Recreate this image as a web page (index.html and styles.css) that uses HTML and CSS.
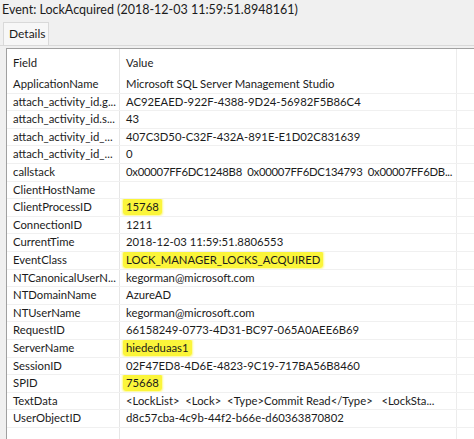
FILE: index.html
```html
<!DOCTYPE html>
<html>
<head>
<meta charset="utf-8">
<link rel="stylesheet" href="styles.css">
</head>
<body>
<div class="titlebar">Event: LockAcquired (2018-12-03 11:59:51.8948161)</div>
<div class="tabs"><div class="tab">Details</div></div>
<div class="pane">
  <div class="grid">
    <div class="row head"><div class="c1">Field</div><div class="c2">Value</div><div class="c3"></div></div>
    <div class="row"><div class="c1">ApplicationName</div><div class="c2">Microsoft SQL Server Management Studio</div><div class="c3"></div></div>
    <div class="row"><div class="c1">attach_activity_id.g...</div><div class="c2">AC92EAED-922F-4388-9D24-56982F5B86C4</div><div class="c3"></div></div>
    <div class="row"><div class="c1">attach_activity_id.s...</div><div class="c2">43</div><div class="c3"></div></div>
    <div class="row"><div class="c1">attach_activity_id_...</div><div class="c2">407C3D50-C32F-432A-891E-E1D02C831639</div><div class="c3"></div></div>
    <div class="row"><div class="c1">attach_activity_id_...</div><div class="c2">0</div><div class="c3"></div></div>
    <div class="row"><div class="c1">callstack</div><div class="c2 tight">0x00007FF6DC1248B8&nbsp; 0x00007FF6DC134793&nbsp; 0x00007FF6DB...</div><div class="c3"></div></div>
    <div class="row"><div class="c1">ClientHostName</div><div class="c2"></div><div class="c3"></div></div>
    <div class="row"><div class="c1">ClientProcessID</div><div class="c2"><span class="hl">15768</span></div><div class="c3"></div></div>
    <div class="row"><div class="c1">ConnectionID</div><div class="c2">1211</div><div class="c3"></div></div>
    <div class="row"><div class="c1">CurrentTime</div><div class="c2">2018-12-03 11:59:51.8806553</div><div class="c3"></div></div>
    <div class="row"><div class="c1">EventClass</div><div class="c2"><span class="hl">LOCK_MANAGER_LOCKS_ACQUIRED</span></div><div class="c3"></div></div>
    <div class="row"><div class="c1">NTCanonicalUserN...</div><div class="c2">kegorman@microsoft.com</div><div class="c3"></div></div>
    <div class="row"><div class="c1">NTDomainName</div><div class="c2">AzureAD</div><div class="c3"></div></div>
    <div class="row"><div class="c1">NTUserName</div><div class="c2">kegorman@microsoft.com</div><div class="c3"></div></div>
    <div class="row"><div class="c1">RequestID</div><div class="c2">66158249-0773-4D31-BC97-065A0AEE6B69</div><div class="c3"></div></div>
    <div class="row"><div class="c1">ServerName</div><div class="c2"><span class="hl">hiededuaas1</span></div><div class="c3"></div></div>
    <div class="row"><div class="c1">SessionID</div><div class="c2">02F47ED8-4D6E-4823-9C19-717BA56B8460</div><div class="c3"></div></div>
    <div class="row"><div class="c1">SPID</div><div class="c2"><span class="hl">75668</span></div><div class="c3"></div></div>
    <div class="row"><div class="c1">TextData</div><div class="c2">&lt;LockList&gt;&nbsp; &lt;Lock&gt;&nbsp; &lt;Type&gt;Commit Read&lt;/Type&gt;&nbsp;&nbsp; &lt;LockSta...</div><div class="c3"></div></div>
    <div class="row"><div class="c1">UserObjectID</div><div class="c2">d8c57cba-4c9b-44f2-b66e-d60363870802</div><div class="c3"></div></div>
    <div class="row tail"><div class="c1"></div><div class="c2"></div><div class="c3"></div></div>
  </div>
</div>
</body>
</html>
```
FILE: styles.css
```css
html, body {
  margin: 0;
  padding: 0;
}
body {
  width: 474px;
  height: 439px;
  overflow: hidden;
  background: #f0f0f0;
  font-family: "Lato", "Noto Sans", sans-serif;
  font-size: 12px;
  color: #1b1b1b;
}
.titlebar {
  height: 20px;
  line-height: 19px;
  padding-left: 2px;
  font-size: 12.5px;
}
.tabs {
  height: 25px;
  display: flex;
  align-items: flex-end;
  padding-left: 3px;
}
.tab {
  width: 39px;
  height: 22px;
  line-height: 22px;
  padding-left: 5px;
  background: #f7f7f7;
  border: 1px solid #d9d9d9;
  border-bottom: none;
}
.pane {
  border-top: 1px solid #d9d9d9;
  padding-top: 2px;
  padding-left: 6px;
}
.grid {
  background: #ffffff;
  border-top: 1px solid #a0a0a0;
  border-left: 1px solid #a0a0a0;
  font-size: 11.3px;
}
.row {
  display: grid;
  grid-template-columns: 113px 337px 1fr;
  height: 17.6px;
  box-sizing: border-box;
  border-bottom: 1px solid #f0f0f0;
  line-height: 16.6px;
  white-space: nowrap;
}
.row.head {
  height: 27px;
  line-height: 27px;
  border-bottom: none;
}
.row.tail {
  height: 20px;
  border-bottom: none;
}
.c1 {
  padding-left: 6px;
  border-right: 1px solid #e6e6e6;
  overflow: hidden;
}
.c2 {
  padding-left: 6px;
  border-right: 1px solid #ececec;
  overflow: hidden;
}
.c2.tight {
  letter-spacing: -0.25px;
}
.hl {
  background: #fbf53a;
  padding: 2px 3px;
  margin-left: -3px;
  border-radius: 3px;
  box-shadow: 0 0 2px 1px rgba(251, 245, 58, 0.6);
}
```
